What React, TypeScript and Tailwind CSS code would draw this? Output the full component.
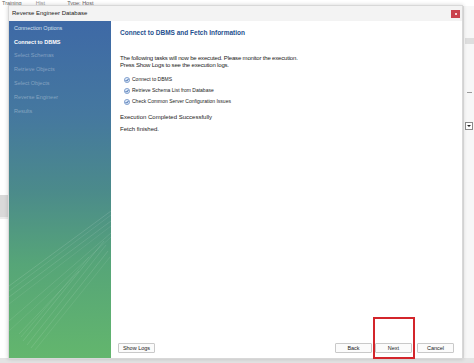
import React from "react";

const font = { fontFamily: '"Liberation Sans", Arial, sans-serif' };

function Check() {
  return (
    <svg width="6" height="6" viewBox="0 0 12 12" className="shrink-0">
      <circle cx="6" cy="6" r="5.2" fill="#dbe7f7" stroke="#4f79b8" strokeWidth="1.2" />
      <path d="M3.2 6.2 L5.3 8.3 L9 3.8" fill="none" stroke="#2b5aa0" strokeWidth="1.8" />
    </svg>
  );
}

function Btn({ label }: { label: string }) {
  return (
    <div className="h-[10px] w-[37px] flex items-center justify-center bg-[#fbfbfb] border border-[#c9c9c9] rounded-[1px] text-[5.5px] text-[#222]">
      {label}
    </div>
  );
}

export default function App() {
  const steps = [
    { t: "Connection Options", c: "text-[#d6e1ee]", b: false },
    { t: "Connect to DBMS", c: "text-white", b: true },
    { t: "Select Schemas", c: "text-white/35", b: false },
    { t: "Retrieve Objects", c: "text-white/35", b: false },
    { t: "Select Objects", c: "text-white/35", b: false },
    { t: "Reverse Engineer", c: "text-white/35", b: false },
    { t: "Results", c: "text-white/35", b: false },
  ];
  return (
    <div className="w-[474px] h-[363px] bg-white relative overflow-hidden" style={font}>
      {/* background application behind the dialog */}
      <div className="absolute left-0 top-0 w-full h-[6px] bg-white flex items-end gap-[14px] pl-[2px] text-[5.5px] text-[#666] leading-[5px] overflow-hidden">
        <span>Training</span>
        <span className="text-[#999]">Hist</span>
        <span className="pl-[8px]">Type: Host</span>
      </div>
      <div className="absolute left-0 top-[195px] w-[8px] h-[22px] bg-[#d9d9d9]" />
      <div className="absolute left-0 top-[217px] w-[8px] h-[2px] bg-[#ececec]" />
      <div className="absolute right-0 top-[6px] w-[11px] h-[357px] bg-[#f7f7f7] border-l border-[#e2e2e2]" />
      <div className="absolute right-0 top-[38px] w-[9px] h-[6px] bg-[#dedede]" />
      <div className="absolute right-[2px] top-[92px] w-[5px] h-[1px] bg-[#9a9a9a]" />
      <div className="absolute right-[1px] top-[122px] w-[8px] h-[8px] bg-white border border-[#8a8a8a] flex items-center justify-center">
        <div className="w-0 h-0 border-l-[2px] border-r-[2px] border-t-[2px] border-l-transparent border-r-transparent border-t-[#222]" />
      </div>
      <div className="absolute left-0 bottom-0 w-full h-[5px] bg-[#e3e3e3]" />

      {/* dialog window */}
      <div className="absolute left-[8px] top-[5px] w-[455px] h-[354px] flex flex-col bg-white border border-[#d8d8d8] shadow-[0_0_4px_rgba(0,0,0,0.18)]">
        <div className="h-[15px] bg-[#f3f3f3] flex items-center justify-between pl-[3px] pr-[2px] shrink-0">
          <span className="text-[6px] text-[#222]">Reverse Engineer Database</span>
          <div className="w-[9px] h-[8px] bg-[#c9424d] flex items-center justify-center">
            <div className="w-[2px] h-[2px] bg-[#f3d3d6]" />
          </div>
        </div>
        <div className="flex-1 flex min-h-0">
          <div className="w-[102px] shrink-0 relative overflow-hidden bg-[linear-gradient(180deg,#3e69a6_0%,#45789f_28%,#4b8a8b_50%,#56a578_72%,#63b66d_100%)]">
            <svg className="absolute left-0 top-0" width="102" height="339" viewBox="0 0 102 339">
              <g fill="none" stroke="#ffffff" strokeWidth="0.8">
                <path d="M0 265 L102 190" opacity="0.16" />
                <path d="M0 270 L102 194" opacity="0.12" />
                <path d="M0 276 L102 200" opacity="0.14" />
                <path d="M0 283 L102 205" opacity="0.1" />
                <path d="M0 300 L102 212" opacity="0.12" />
                <path d="M0 310 L102 216" opacity="0.1" />
                <path d="M14 320 L95 220" opacity="0.14" />
                <path d="M18 324 L97 224" opacity="0.12" />
                <path d="M22 327 L99 230" opacity="0.14" />
                <path d="M26 329 L101 236" opacity="0.1" />
                <path d="M12 316 L80 236" opacity="0.1" />
                <path d="M10 313 L70 250" opacity="0.12" />
              </g>
            </svg>
            <div className="relative flex flex-col pl-[5px]">
              {steps.map((s) => (
                <div
                  key={s.t}
                  className={`h-[13.8px] flex items-center text-[5.5px] ${s.c} ${s.b ? "font-bold" : ""}`}
                >
                  {s.t}
                </div>
              ))}
            </div>
          </div>
          <div className="flex-1 flex flex-col pl-[9px] pr-[8px] relative">
            <div className="mt-[8px] h-[8px] flex items-center text-[6.5px] font-bold text-[#1e4f8e]">
              Connect to DBMS and Fetch Information
            </div>
            <div className="mt-[18px] text-[6px] leading-[6.5px] tracking-[-0.18px] text-[#222]">
              <div>The following tasks will now be executed. Please monitor the execution.</div>
              <div>Press Show Logs to see the execution logs.</div>
            </div>
            <div className="mt-[6px] flex flex-col pl-[4px] text-[5px] text-[#222]">
              {["Connect to DBMS", "Retrieve Schema List from Database", "Check Common Server Configuration Issues"].map((t) => (
                <div key={t} className="h-[11px] flex items-center gap-[2px]">
                  <Check />
                  <span>{t}</span>
                </div>
              ))}
            </div>
            <div className="mt-[7px] h-[7px] flex items-center text-[6px] text-[#222]">
              Execution Completed Successfully
            </div>
            <div className="mt-[5px] h-[7px] flex items-center text-[6px] text-[#222]">
              Fetch finished.
            </div>
            <div className="flex-1" />
            <div className="h-[10px] mb-[5px] flex items-center">
              <div className="-ml-[2px]"><Btn label="Show Logs" /></div>
              <div className="flex-1" />
              <div className="flex gap-[5px]">
                <div className="w-[35px]"><Btn label="Back" /></div>
                <Btn label="Next" />
                <Btn label="Cancel" />
              </div>
            </div>
          </div>
        </div>
      </div>
      {/* annotation highlight */}
      <div className="absolute left-[373px] top-[317px] w-[42px] h-[42px] border-2 border-[#d3252b]" />
    </div>
  );
}
